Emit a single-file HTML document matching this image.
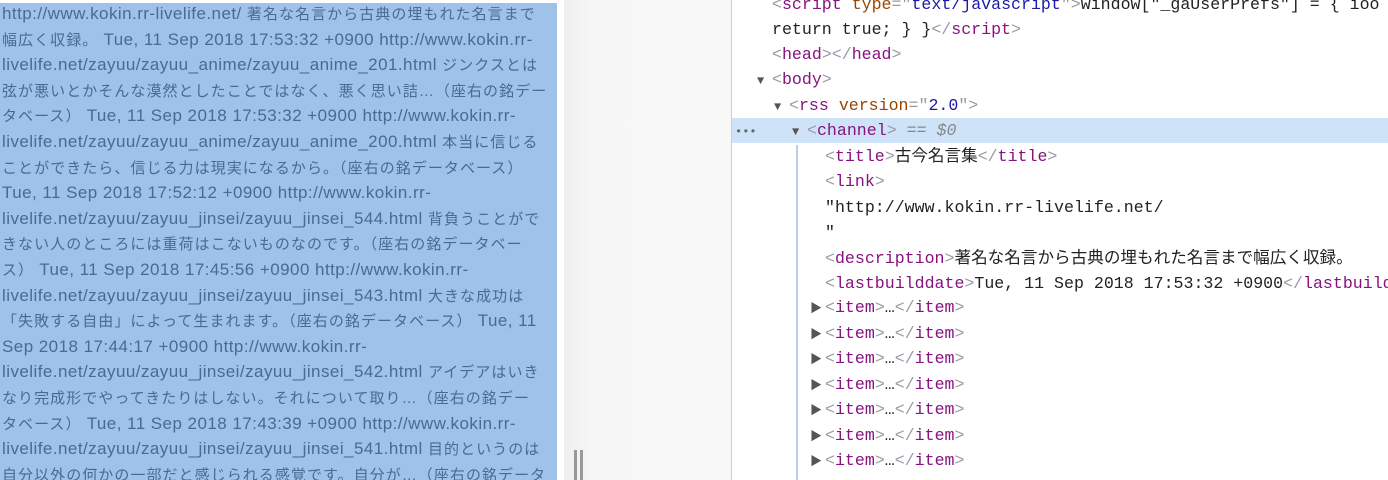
<!DOCTYPE html>
<html><head><meta charset="utf-8"><style>
html,body{margin:0;width:1388px;height:480px;overflow:hidden;background:#fff;position:relative}
#left{position:absolute;left:0;top:3px;width:557px;height:477px;background:#9fc3e8;color:#4a6993;font:17px "Liberation Sans","Noto Sans CJK JP",sans-serif;overflow:hidden;letter-spacing:0.45px}
#left div{height:25.6px;line-height:22px;white-space:nowrap;padding-left:2px;overflow:hidden}
#left i{font-style:normal;font-size:15px;letter-spacing:1.05px}
#gutter{position:absolute;left:564px;top:0;width:167px;height:480px;background:linear-gradient(90deg,#efefef 0,#f7f7f7 30px,#f8f8f8 100%);border-right:1px solid #cfcfcf}
.bar{position:absolute;top:450px;width:3px;height:30px;background:#999}
#dt{position:absolute;left:732px;top:0;width:656px;height:480px;font:16.6px "Liberation Mono","Noto Sans CJK JP",monospace;color:#222;overflow:hidden}
.r{position:absolute;left:0;width:656px;height:25.6px;line-height:25.6px;white-space:nowrap}
.t{color:#881280}.b{color:#9a9aa6}.an{color:#994500}.av{color:#1a1aa6}
.tri{display:inline-block;width:15px;font-size:12px;color:#555}
</style></head><body>
<div id="left">
<div>http://www.kokin.rr-livelife.net/ <i>著名な名言から古典の埋もれた名言まで</i></div>
<div><i>幅広く収録。</i> Tue, 11 Sep 2018 17:53:32 +0900 http://www.kokin.rr-</div>
<div>livelife.net/zayuu/zayuu_anime/zayuu_anime_201.html <i>ジンクスとは</i></div>
<div><i>弦が悪いとかそんな漠然としたことではなく、悪く思い詰…（座右の銘デー</i></div>
<div><i>タベース）</i> Tue, 11 Sep 2018 17:53:32 +0900 http://www.kokin.rr-</div>
<div>livelife.net/zayuu/zayuu_anime/zayuu_anime_200.html <i>本当に信じる</i></div>
<div><i>ことができたら、信じる力は現実になるから。（座右の銘データベース）</i></div>
<div>Tue, 11 Sep 2018 17:52:12 +0900 http://www.kokin.rr-</div>
<div>livelife.net/zayuu/zayuu_jinsei/zayuu_jinsei_544.html <i>背負うことがで</i></div>
<div><i>きない人のところには重荷はこないものなのです。（座右の銘データベー</i></div>
<div><i>ス）</i> Tue, 11 Sep 2018 17:45:56 +0900 http://www.kokin.rr-</div>
<div>livelife.net/zayuu/zayuu_jinsei/zayuu_jinsei_543.html <i>大きな成功は</i></div>
<div><i>「失敗する自由」によって生まれます。（座右の銘データベース）</i> Tue, 11</div>
<div>Sep 2018 17:44:17 +0900 http://www.kokin.rr-</div>
<div>livelife.net/zayuu/zayuu_jinsei/zayuu_jinsei_542.html <i>アイデアはいき</i></div>
<div><i>なり完成形でやってきたりはしない。それについて取り…（座右の銘デー</i></div>
<div><i>タベース）</i> Tue, 11 Sep 2018 17:43:39 +0900 http://www.kokin.rr-</div>
<div>livelife.net/zayuu/zayuu_jinsei/zayuu_jinsei_541.html <i>目的というのは</i></div>
<div><i>自分以外の何かの一部だと感じられる感覚です。自分が…（座右の銘データ</i></div>
</div>
<div id="gutter"></div>
<div class="bar" style="left:574px"></div><div class="bar" style="left:580px"></div>
<div id="dt">
<div style="position:absolute;left:0;top:118px;width:656px;height:25px;background:#cfe3f8"></div>
<div style="position:absolute;left:64px;top:145px;width:2px;height:335px;background:#b8cdea"></div>
<div class="r" style="top:-8px;left:40px"><span class="b">&lt;</span><span class="t">script</span> <span class="an">type</span><span class="b">="</span><span class="av">text/javascript</span><span class="b">"&gt;</span>window["_gaUserPrefs"] = { ioo</div>
<div class="r" style="top:17px;left:40px">return true; } }<span class="b">&lt;/</span><span class="t">script</span><span class="b">&gt;</span></div>
<div class="r" style="top:42px;left:40px"><span class="b">&lt;</span><span class="t">head</span><span class="b">&gt;&lt;/</span><span class="t">head</span><span class="b">&gt;</span></div>
<div class="r" style="top:67px;left:25px"><span class="tri">▼</span><span class="b">&lt;</span><span class="t">body</span><span class="b">&gt;</span></div>
<div class="r" style="top:93px;left:42px"><span class="tri">▼</span><span class="b">&lt;</span><span class="t">rss</span> <span class="an">version</span><span class="b">="</span><span class="av">2.0</span><span class="b">"&gt;</span></div>
<div class="r" style="top:118px;left:0"><span style="color:#666;font-size:12px;margin-left:3px">•••</span></div>
<div class="r" style="top:118px;left:60px"><span class="tri">▼</span><span class="b">&lt;</span><span class="t">channel</span><span class="b">&gt;</span> <span style="color:#888;font-style:italic">== $0</span></div>
<div class="r" style="top:144px;left:93px"><span class="b">&lt;</span><span class="t">title</span><span class="b">&gt;</span>古今名言集<span class="b">&lt;/</span><span class="t">title</span><span class="b">&gt;</span></div>
<div class="r" style="top:169px;left:93px"><span class="b">&lt;</span><span class="t">link</span><span class="b">&gt;</span></div>
<div class="r" style="top:195px;left:93px">"http://www.kokin.rr-livelife.net/</div>
<div class="r" style="top:220px;left:93px">"</div>
<div class="r" style="top:246px;left:93px"><span class="b">&lt;</span><span class="t">description</span><span class="b">&gt;</span>著名な名言から古典の埋もれた名言まで幅広く収録。</div>
<div class="r" style="top:271px;left:93px"><span class="b">&lt;</span><span class="t">lastbuilddate</span><span class="b">&gt;</span>Tue, 11 Sep 2018 17:53:32 +0900<span class="b">&lt;/</span><span class="t">lastbuilddate</span><span class="b">&gt;</span></div>
<div class="r" style="top:295px;left:78px"><span class="tri">▶</span><span class="b">&lt;</span><span class="t">item</span><span class="b">&gt;</span>…<span class="b">&lt;/</span><span class="t">item</span><span class="b">&gt;</span></div>
<div class="r" style="top:321px;left:78px"><span class="tri">▶</span><span class="b">&lt;</span><span class="t">item</span><span class="b">&gt;</span>…<span class="b">&lt;/</span><span class="t">item</span><span class="b">&gt;</span></div>
<div class="r" style="top:346px;left:78px"><span class="tri">▶</span><span class="b">&lt;</span><span class="t">item</span><span class="b">&gt;</span>…<span class="b">&lt;/</span><span class="t">item</span><span class="b">&gt;</span></div>
<div class="r" style="top:372px;left:78px"><span class="tri">▶</span><span class="b">&lt;</span><span class="t">item</span><span class="b">&gt;</span>…<span class="b">&lt;/</span><span class="t">item</span><span class="b">&gt;</span></div>
<div class="r" style="top:397px;left:78px"><span class="tri">▶</span><span class="b">&lt;</span><span class="t">item</span><span class="b">&gt;</span>…<span class="b">&lt;/</span><span class="t">item</span><span class="b">&gt;</span></div>
<div class="r" style="top:423px;left:78px"><span class="tri">▶</span><span class="b">&lt;</span><span class="t">item</span><span class="b">&gt;</span>…<span class="b">&lt;/</span><span class="t">item</span><span class="b">&gt;</span></div>
<div class="r" style="top:448px;left:78px"><span class="tri">▶</span><span class="b">&lt;</span><span class="t">item</span><span class="b">&gt;</span>…<span class="b">&lt;/</span><span class="t">item</span><span class="b">&gt;</span></div>
</div>
</body></html>
